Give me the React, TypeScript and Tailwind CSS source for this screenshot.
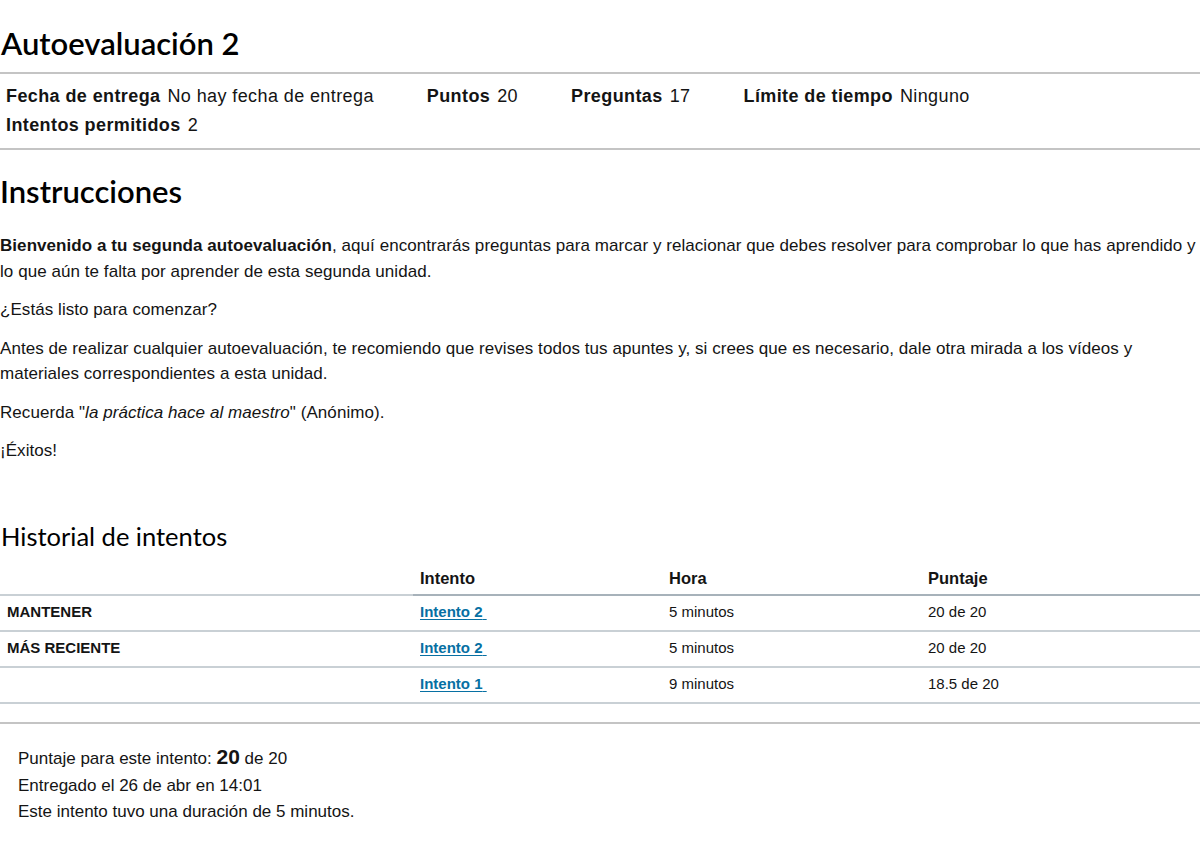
import React from "react";

const lato = "font-['Lato','Noto_Sans',sans-serif]";
const arial = "font-['Liberation_Sans',Arial,sans-serif]";

function Meta({ label, value }: { label: string; value: string }) {
  return (
    <span className="whitespace-nowrap">
      <span className="font-bold">{label}</span>
      <span className="ml-[7px]">{value}</span>
    </span>
  );
}

const rows = [
  { label: "MANTENER", link: "Intento 2", hora: "5 minutos", score: "20 de 20" },
  { label: "MÁS RECIENTE", link: "Intento 2", hora: "5 minutos", score: "20 de 20" },
  { label: "", link: "Intento 1", hora: "9 minutos", score: "18.5 de 20" },
];

export default function App() {
  return (
    <div className={`w-[1200px] h-[848px] bg-white text-[#141414] ${arial} overflow-hidden`}>
      <h1 className={`${lato} text-[31px] font-semibold leading-[36px] pt-[25px] pl-[1px] text-black`}>
        Autoevaluación 2
      </h1>
      <div className="mt-[11px] h-[2px] bg-[#c4c4c4]" />
      <div className="pl-[6px] pt-[8px] pb-[8px] text-[18px] tracking-[0.4px]">
        <div className="h-[29px] flex items-center gap-[53px]">
          <Meta label="Fecha de entrega" value="No hay fecha de entrega" />
          <Meta label="Puntos" value="20" />
          <Meta label="Preguntas" value="17" />
          <Meta label="Límite de tiempo" value="Ninguno" />
        </div>
        <div className="h-[29px] flex items-center">
          <Meta label="Intentos permitidos" value="2" />
        </div>
      </div>
      <div className="h-[2px] bg-[#c4c4c4]" />

      <h2 className={`${lato} text-[31px] font-semibold leading-[36px] mt-[23px] text-black`}>Instrucciones</h2>

      <div className="mt-[24px] text-[17px] leading-[25.5px] tracking-[0.06px]">
        <p className="mb-[13px]">
          <strong>Bienvenido a tu segunda autoevaluación</strong>, aquí encontrarás preguntas para marcar y
          relacionar que debes resolver para comprobar lo que has aprendido y lo que aún te falta por aprender
          de esta segunda unidad.
        </p>
        <p className="mb-[13px]">¿Estás listo para comenzar?</p>
        <p className="mb-[13px]">
          Antes de realizar cualquier autoevaluación, te recomiendo que revises todos tus apuntes y, si crees
          que es necesario, dale otra mirada a los vídeos y materiales correspondientes a esta unidad.
        </p>
        <p className="mb-[13px]">
          Recuerda "<em>la práctica hace al maestro</em>" (Anónimo).
        </p>
        <p>¡Éxitos!</p>
      </div>

      <h3 className={`${lato} text-[25.5px] leading-[30px] mt-[57px] pl-[1px] text-black`}>
        Historial de intentos
      </h3>

      <table className="mt-[12px] w-[1200px] border-collapse table-fixed">
        <colgroup>
          <col className="w-[413px]" />
          <col className="w-[249px]" />
          <col className="w-[259px]" />
          <col />
        </colgroup>
        <thead>
          <tr className="h-[32px] text-[16.5px] font-bold text-left">
            <th className="border-b-2 border-[#c9d0d5]" />
            <th className="pl-[7px] font-bold border-b-2 border-[#a7b2ba]">Intento</th>
            <th className="pl-[7px] font-bold border-b-2 border-[#a7b2ba]">Hora</th>
            <th className="pl-[7px] font-bold border-b-2 border-[#a7b2ba]">Puntaje</th>
          </tr>
        </thead>
        <tbody className="text-[15px]">
          {rows.map((r, i) => (
            <tr key={i} className="h-[36px] border-b-2 border-[#c9d0d5]">
              <td className="pl-[7px] font-bold">{r.label}</td>
              <td className="pl-[7px]">
                <a href="#" className="text-[#0770a3] font-bold underline underline-offset-[2px]">
                  {r.link}&nbsp;
                </a>
              </td>
              <td className="pl-[7px]">{r.hora}</td>
              <td className="pl-[7px]">{r.score}</td>
            </tr>
          ))}
        </tbody>
      </table>

      <div className="mt-[18px] h-[2px] bg-[#c4c4c4]" />

      <div className="pl-[18px] pt-[20px] text-[17px] leading-[26px]">
        <div className="mb-[1px]">
          Puntaje para este intento: <span className="font-bold text-[21px]">20</span> de 20
        </div>
        <div>Entregado el 26 de abr en 14:01</div>
        <div>Este intento tuvo una duración de 5 minutos.</div>
      </div>
    </div>
  );
}
